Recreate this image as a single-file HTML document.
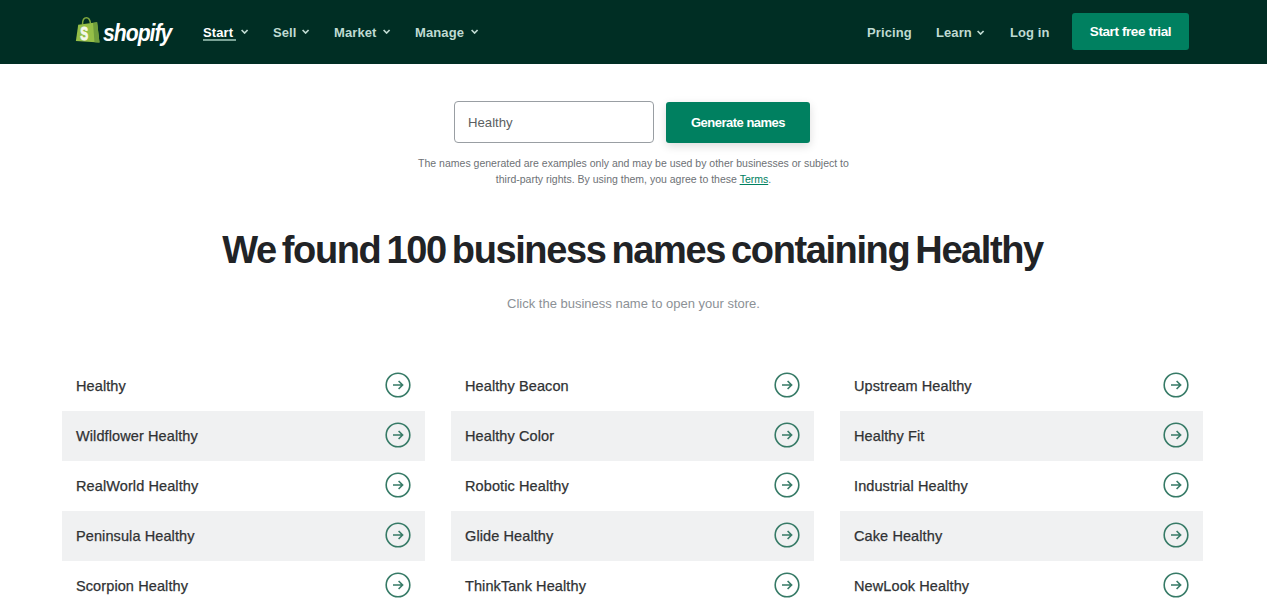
<!DOCTYPE html>
<html><head><meta charset="utf-8">
<style>
*{margin:0;padding:0;box-sizing:border-box}
html,body{width:1271px;height:611px;overflow:hidden;background:#fff}
body{font-family:"Liberation Sans",sans-serif;position:relative}
.hdr{position:absolute;left:0;top:0;width:1267px;height:64px;background:#002e24}
.abs{position:absolute;white-space:nowrap}
.nav{font-size:13px;font-weight:bold;color:#bfdad2;top:24.5px;line-height:16px;letter-spacing:0.1px}
.chev{position:absolute;width:8px;height:5px}
.btn{position:absolute;background:#008060;border-radius:3px;color:#fff;font-weight:bold;text-align:center}
.inp{position:absolute;left:454px;top:101px;width:200px;height:42px;border:1px solid #999ea3;border-radius:4px;background:#fff}
.disc{font-size:10.5px;color:#6d7175;text-align:center;left:0;width:1267px;line-height:15.5px}
.disc a{color:#008060;text-decoration:underline}
h1{position:absolute;left:-1px;width:1267px;text-align:center;font-size:38px;font-weight:bold;color:#212326;top:227px;line-height:46px;letter-spacing:-1.4px;word-spacing:-3px}
.sub{left:0;width:1267px;text-align:center;font-size:13px;color:#8c9196;top:295px;line-height:18px}
.row{position:absolute;width:363px;height:50px}
.row.g{background:#f0f1f2}
.row span{position:absolute;left:14px;top:15.5px;font-size:14.5px;color:#303234;-webkit-text-stroke:0.25px #303234;letter-spacing:0.1px;line-height:18px;white-space:nowrap}
.row svg{position:absolute;right:14px;top:11px}
</style></head><body>
<div class="hdr">
  <!-- logo -->
  <svg class="abs" style="left:70px;top:12px" width="36" height="36" viewBox="0 0 36 36">
    <path d="M12.5 12.5 C12.5 8 14.5 5.8 16.5 5.8 C18.5 5.8 20 8 20.5 11.5" fill="none" stroke="#7fa83e" stroke-width="1.5"/>
    <path d="M8.2 12.7 L27.1 10.3 L29.5 30.6 L5.9 28.9 Z" fill="#95bf47"/>
    <path d="M23 11 L27.1 10.3 L29.5 30.6 L24.5 30.3 Z" fill="#6f9d3c"/>
    <text x="0" y="0" transform="translate(10.2 27.7) scale(0.68 1.05)" font-family="Liberation Sans" font-weight="bold" font-size="17.5" fill="#f4f8ec" stroke="#f4f8ec" stroke-width="0.9">S</text>
  </svg>
  <div class="abs" style="left:103px;top:19.5px;font-size:23.5px;font-weight:bold;font-style:italic;color:#fff;letter-spacing:-1.1px;line-height:26px;transform:scaleX(0.9);transform-origin:0 0">shopify</div>

  <div class="abs nav" style="left:203px;color:#fff">Start</div>
  <div class="abs" style="left:203px;top:39px;width:33px;height:2px;background:#7aa396"></div>
  <svg class="chev" style="left:241px;top:29px" viewBox="0 0 8 5"><path d="M0.6 1 L3.6 4 L6.6 1" fill="none" stroke="#bfdad2" stroke-width="1.7"/></svg>
  <div class="abs nav" style="left:273px">Sell</div>
  <svg class="chev" style="left:302px;top:29px" viewBox="0 0 8 5"><path d="M0.6 1 L3.6 4 L6.6 1" fill="none" stroke="#bfdad2" stroke-width="1.7"/></svg>
  <div class="abs nav" style="left:334px">Market</div>
  <svg class="chev" style="left:383px;top:29px" viewBox="0 0 8 5"><path d="M0.6 1 L3.6 4 L6.6 1" fill="none" stroke="#bfdad2" stroke-width="1.7"/></svg>
  <div class="abs nav" style="left:415px">Manage</div>
  <svg class="chev" style="left:471px;top:29px" viewBox="0 0 8 5"><path d="M0.6 1 L3.6 4 L6.6 1" fill="none" stroke="#bfdad2" stroke-width="1.7"/></svg>

  <div class="abs nav" style="left:867px">Pricing</div>
  <div class="abs nav" style="left:936px">Learn</div>
  <svg class="chev" style="left:977px;top:30px" viewBox="0 0 8 5"><path d="M0.6 1 L3.6 4 L6.6 1" fill="none" stroke="#bfdad2" stroke-width="1.7"/></svg>
  <div class="abs nav" style="left:1010px">Log in</div>
  <div class="btn" style="left:1072px;top:13px;width:117px;height:37px;font-size:13.5px;line-height:37px;letter-spacing:-0.4px">Start free trial</div>
</div>

<div class="inp"><span class="abs" style="left:13px;top:13px;font-size:13.2px;color:#5c5f62;line-height:16px">Healthy</span></div>
<div class="btn" style="left:666px;top:102px;width:144px;height:41px;font-size:13px;letter-spacing:-0.5px;line-height:41px;box-shadow:0 3px 10px rgba(0,0,0,0.14)">Generate names</div>

<div class="abs disc" style="top:156px">The names generated are examples only and may be used by other businesses or subject to<br>third-party rights. By using them, you agree to these <a>Terms</a>.</div>

<h1>We found 100 business names containing Healthy</h1>
<div class="abs sub">Click the business name to open your store.</div>

<div class="row" style="left:62px;top:361px"><span>Healthy</span><svg width="26" height="26" viewBox="0 0 26 26"><circle cx="13" cy="13" r="11.8" fill="none" stroke="#367a66" stroke-width="1.6"/><path d="M8 13 H17.6 M13.6 9 L17.6 13 L13.6 17" fill="none" stroke="#367a66" stroke-width="1.6"/></svg></div>
<div class="row" style="left:451px;top:361px"><span>Healthy Beacon</span><svg width="26" height="26" viewBox="0 0 26 26"><circle cx="13" cy="13" r="11.8" fill="none" stroke="#367a66" stroke-width="1.6"/><path d="M8 13 H17.6 M13.6 9 L17.6 13 L13.6 17" fill="none" stroke="#367a66" stroke-width="1.6"/></svg></div>
<div class="row" style="left:840px;top:361px"><span>Upstream Healthy</span><svg width="26" height="26" viewBox="0 0 26 26"><circle cx="13" cy="13" r="11.8" fill="none" stroke="#367a66" stroke-width="1.6"/><path d="M8 13 H17.6 M13.6 9 L17.6 13 L13.6 17" fill="none" stroke="#367a66" stroke-width="1.6"/></svg></div>
<div class="row g" style="left:62px;top:411px"><span>Wildflower Healthy</span><svg width="26" height="26" viewBox="0 0 26 26"><circle cx="13" cy="13" r="11.8" fill="none" stroke="#367a66" stroke-width="1.6"/><path d="M8 13 H17.6 M13.6 9 L17.6 13 L13.6 17" fill="none" stroke="#367a66" stroke-width="1.6"/></svg></div>
<div class="row g" style="left:451px;top:411px"><span>Healthy Color</span><svg width="26" height="26" viewBox="0 0 26 26"><circle cx="13" cy="13" r="11.8" fill="none" stroke="#367a66" stroke-width="1.6"/><path d="M8 13 H17.6 M13.6 9 L17.6 13 L13.6 17" fill="none" stroke="#367a66" stroke-width="1.6"/></svg></div>
<div class="row g" style="left:840px;top:411px"><span>Healthy Fit</span><svg width="26" height="26" viewBox="0 0 26 26"><circle cx="13" cy="13" r="11.8" fill="none" stroke="#367a66" stroke-width="1.6"/><path d="M8 13 H17.6 M13.6 9 L17.6 13 L13.6 17" fill="none" stroke="#367a66" stroke-width="1.6"/></svg></div>
<div class="row" style="left:62px;top:461px"><span>RealWorld Healthy</span><svg width="26" height="26" viewBox="0 0 26 26"><circle cx="13" cy="13" r="11.8" fill="none" stroke="#367a66" stroke-width="1.6"/><path d="M8 13 H17.6 M13.6 9 L17.6 13 L13.6 17" fill="none" stroke="#367a66" stroke-width="1.6"/></svg></div>
<div class="row" style="left:451px;top:461px"><span>Robotic Healthy</span><svg width="26" height="26" viewBox="0 0 26 26"><circle cx="13" cy="13" r="11.8" fill="none" stroke="#367a66" stroke-width="1.6"/><path d="M8 13 H17.6 M13.6 9 L17.6 13 L13.6 17" fill="none" stroke="#367a66" stroke-width="1.6"/></svg></div>
<div class="row" style="left:840px;top:461px"><span>Industrial Healthy</span><svg width="26" height="26" viewBox="0 0 26 26"><circle cx="13" cy="13" r="11.8" fill="none" stroke="#367a66" stroke-width="1.6"/><path d="M8 13 H17.6 M13.6 9 L17.6 13 L13.6 17" fill="none" stroke="#367a66" stroke-width="1.6"/></svg></div>
<div class="row g" style="left:62px;top:511px"><span>Peninsula Healthy</span><svg width="26" height="26" viewBox="0 0 26 26"><circle cx="13" cy="13" r="11.8" fill="none" stroke="#367a66" stroke-width="1.6"/><path d="M8 13 H17.6 M13.6 9 L17.6 13 L13.6 17" fill="none" stroke="#367a66" stroke-width="1.6"/></svg></div>
<div class="row g" style="left:451px;top:511px"><span>Glide Healthy</span><svg width="26" height="26" viewBox="0 0 26 26"><circle cx="13" cy="13" r="11.8" fill="none" stroke="#367a66" stroke-width="1.6"/><path d="M8 13 H17.6 M13.6 9 L17.6 13 L13.6 17" fill="none" stroke="#367a66" stroke-width="1.6"/></svg></div>
<div class="row g" style="left:840px;top:511px"><span>Cake Healthy</span><svg width="26" height="26" viewBox="0 0 26 26"><circle cx="13" cy="13" r="11.8" fill="none" stroke="#367a66" stroke-width="1.6"/><path d="M8 13 H17.6 M13.6 9 L17.6 13 L13.6 17" fill="none" stroke="#367a66" stroke-width="1.6"/></svg></div>
<div class="row" style="left:62px;top:561px"><span>Scorpion Healthy</span><svg width="26" height="26" viewBox="0 0 26 26"><circle cx="13" cy="13" r="11.8" fill="none" stroke="#367a66" stroke-width="1.6"/><path d="M8 13 H17.6 M13.6 9 L17.6 13 L13.6 17" fill="none" stroke="#367a66" stroke-width="1.6"/></svg></div>
<div class="row" style="left:451px;top:561px"><span>ThinkTank Healthy</span><svg width="26" height="26" viewBox="0 0 26 26"><circle cx="13" cy="13" r="11.8" fill="none" stroke="#367a66" stroke-width="1.6"/><path d="M8 13 H17.6 M13.6 9 L17.6 13 L13.6 17" fill="none" stroke="#367a66" stroke-width="1.6"/></svg></div>
<div class="row" style="left:840px;top:561px"><span>NewLook Healthy</span><svg width="26" height="26" viewBox="0 0 26 26"><circle cx="13" cy="13" r="11.8" fill="none" stroke="#367a66" stroke-width="1.6"/><path d="M8 13 H17.6 M13.6 9 L17.6 13 L13.6 17" fill="none" stroke="#367a66" stroke-width="1.6"/></svg></div>

</body></html>
